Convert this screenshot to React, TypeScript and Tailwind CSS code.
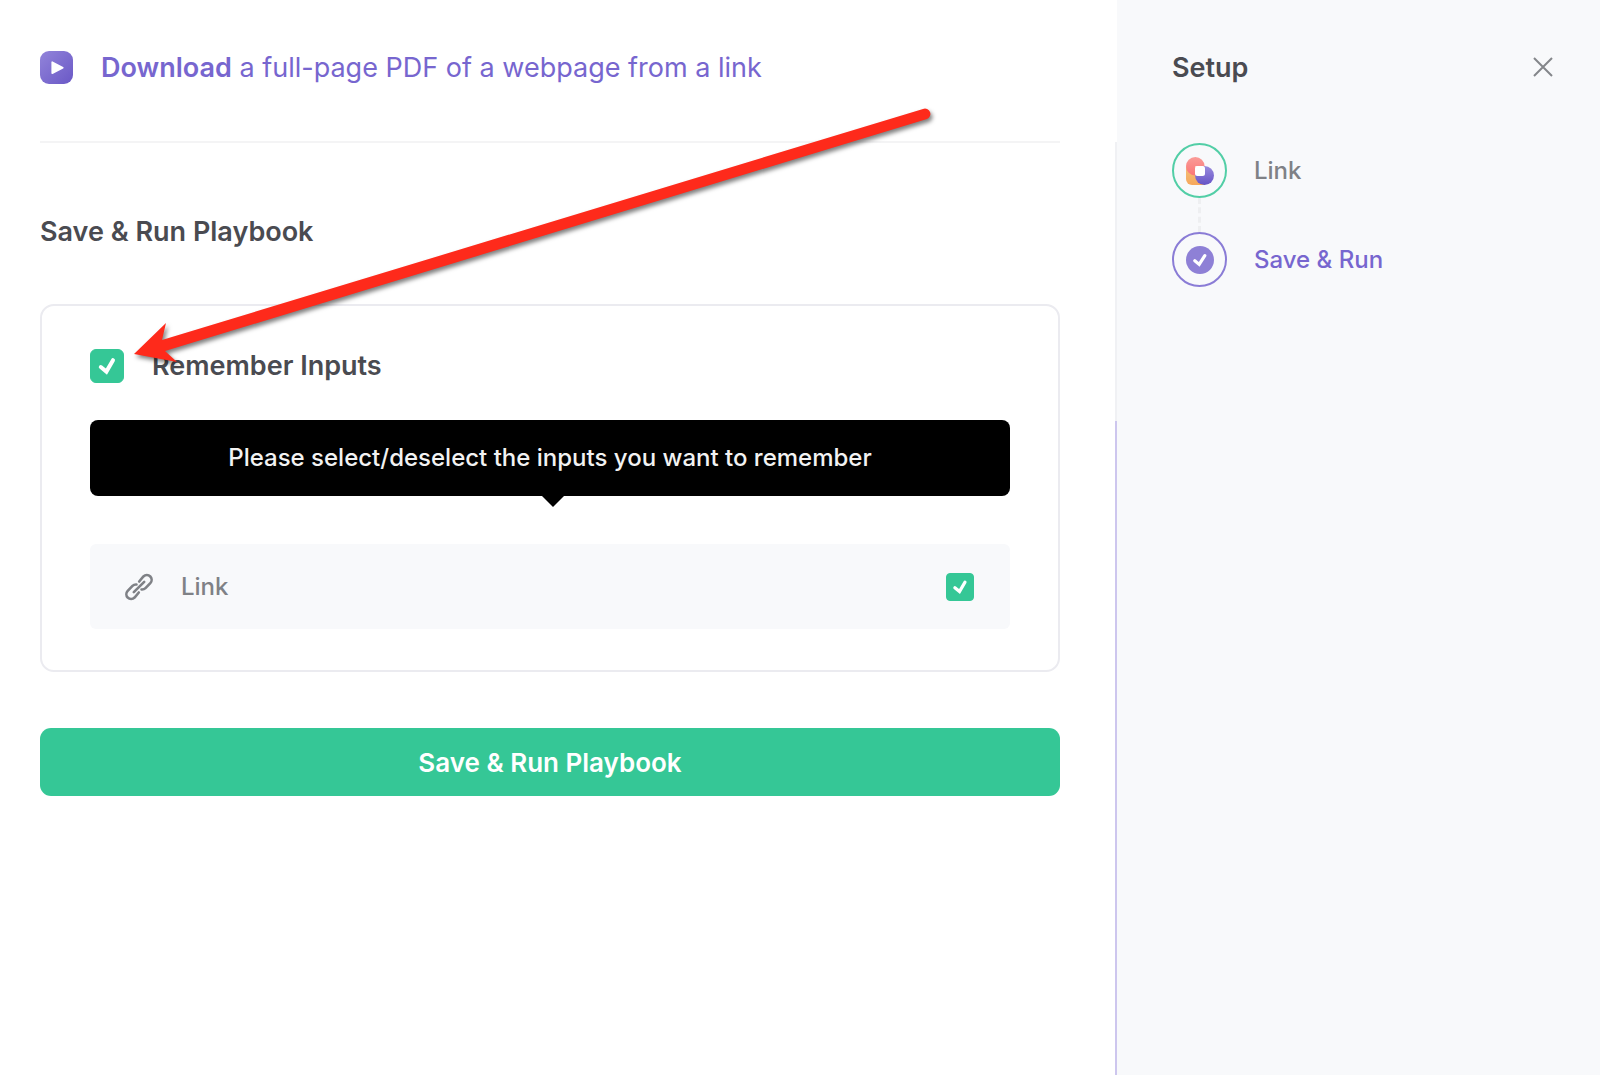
import { useState } from "react";
import clsx from "clsx";

function CheckMark({ className }: { className?: string }) {
  return (
    <svg viewBox="0 0 34 34" fill="none" className={className} aria-hidden>
      <path
        d="M10.8 18l5.6 4.6 6.6-11.4"
        stroke="currentColor"
        strokeWidth="4"
        strokeLinecap="round"
        strokeLinejoin="miter"
      />
    </svg>
  );
}

function Checkbox({
  id,
  small,
  checked,
  onChange,
}: {
  id: string;
  small?: boolean;
  checked: boolean;
  onChange: (value: boolean) => void;
}) {
  return (
    <span className={clsx("grid shrink-0", small ? "size-7" : "size-[34px]")}>
      <input
        id={id}
        type="checkbox"
        checked={checked}
        onChange={(e) => onChange(e.target.checked)}
        className={clsx(
          "peer col-start-1 row-start-1 size-full cursor-pointer appearance-none border border-[#35c796] bg-white checked:bg-[#35c796]",
          small ? "rounded-[4px]" : "rounded-[6px]",
        )}
      />
      <CheckMark className="pointer-events-none col-start-1 row-start-1 size-full text-white opacity-0 peer-checked:opacity-100" />
    </span>
  );
}

function PlaybookIcon() {
  return (
    <svg viewBox="0 0 33 33" className="size-[33px] shrink-0" aria-hidden>
      <defs>
        <linearGradient id="playbook" x1="0" y1="0" x2="1" y2="1">
          <stop offset="0" stopColor="#9284da" />
          <stop offset="1" stopColor="#6a58c6" />
        </linearGradient>
      </defs>
      <rect width="33" height="33" rx="9" fill="url(#playbook)" />
      <path
        d="M12.2 11.2v11l10.6-5.5z"
        fill="#fff"
        stroke="#fff"
        strokeWidth="1.6"
        strokeLinejoin="round"
      />
    </svg>
  );
}

function BrandIcon() {
  return (
    <svg viewBox="0 0 28 28" className="size-7" aria-hidden>
      <defs>
        <linearGradient id="coral" x1="0" y1="0" x2="0" y2="1">
          <stop offset="0" stopColor="#fa9c98" />
          <stop offset="1" stopColor="#fb7676" />
        </linearGradient>
        <linearGradient id="amber" x1="0" y1="0" x2="0" y2="1">
          <stop offset="0" stopColor="#f3c078" />
          <stop offset="1" stopColor="#f6a75c" />
        </linearGradient>
        <linearGradient id="violet" x1="0" y1="0" x2="0" y2="1">
          <stop offset="0" stopColor="#9a8cde" />
          <stop offset="1" stopColor="#6653c6" />
        </linearGradient>
      </defs>
      <path d="M0 10v12a6 6 0 0 0 6 6h13V10z" fill="url(#amber)" />
      <circle cx="18.5" cy="18.5" r="9.5" fill="url(#violet)" />
      <path
        d="M9.3 0a9.3 9.3 0 0 1 9.3 9.3H9.3v9.3A9.3 9.3 0 0 1 9.3 0z"
        fill="url(#coral)"
      />
      <rect x="9" y="9" width="10" height="10" rx="2.5" fill="#fff" />
    </svg>
  );
}

function DoneIcon() {
  return (
    <svg viewBox="0 0 28 28" fill="none" className="size-7" aria-hidden>
      <circle cx="14" cy="14" r="14" fill="#8e80d6" />
      <path
        d="M8.8 14.8l4.4 3.6 5.6-8.8"
        stroke="#fff"
        strokeWidth="3.2"
        strokeLinecap="round"
      />
    </svg>
  );
}

function ChainIcon() {
  return (
    <svg
      viewBox="0 0 28 28"
      fill="none"
      stroke="#7f8186"
      strokeWidth="2.6"
      strokeLinecap="round"
      className="size-7 shrink-0"
      aria-hidden
    >
      <path d="M14.2 8.5l4.2-5a4.9 4.9 0 0 1 6.9 0 4.900 4.900 0 0 1 0 6.700l-4.800 4.900a4.900 4.900 0 0 1-4 1.400" />
      <path d="M13.800 19.500l-4.200 5a4.900 4.900 0 0 1-6.900 0 4.900 4.900 0 0 1 0-6.700l4.800-4.900a4.900 4.900 0 0 1 4-1.400" />
      <path d="M8.8 19.2L19.2 8.8" />
    </svg>
  );
}

/* Annotation laid over the form, pointing at the first tick box. */
function PointerArrow() {
  return (
    <svg
      viewBox="0 0 820 270"
      className="pointer-events-none absolute top-[100px] left-[124px] h-[270px] w-[820px]"
      aria-hidden
    >
      <path
        d="M10 254L42 223L38 240L799 9A5.3 5.3 0 0 1 803 19L41 251L53 262Z"
        fill="#fe2a1b"
        className="drop-shadow-[2px_3px_2px_rgba(0,0,0,0.5)]"
      />
    </svg>
  );
}

function Sidebar() {
  return (
    <aside className="flex w-[485px] shrink-0">
      <div className="flex w-0.5 flex-col" aria-hidden>
        <div className="h-[142px]" />
        <div className="h-[279px] bg-[#f0f1f4]" />
        <div className="flex-1 bg-[#cdc6ee]" />
      </div>
      <div className="flex-1 bg-[#f8f9fb] pr-[45px] pl-[55px]">
        <div className="flex h-[143px] items-start justify-between pt-12">
          <h2 className="text-[27px] leading-10 font-semibold text-[#4a4b51]">Setup</h2>
          <button type="button" aria-label="Close" className="flex h-[38px] items-center">
            <svg viewBox="0 0 24 24" className="size-6" aria-hidden>
              <path d="M3 3l18 18M21 3L3 21" stroke="#84868a" strokeWidth="2" />
            </svg>
          </button>
        </div>
        <ol className="flex flex-col text-[24px] font-medium">
          <li className="flex items-center gap-[27px] text-[#7f8186]">
            <span className="flex size-[55px] items-center justify-center rounded-full border-2 border-[#35c796]/85">
              <BrandIcon />
            </span>
            Link
          </li>
          <li
            className="ml-[26px] h-[34px] border-l-3 border-dashed border-[#eeeff1]"
            aria-hidden
          />
          <li className="flex items-center gap-[27px] text-[#7766cf]" aria-current="step">
            <span className="flex size-[55px] items-center justify-center rounded-full border-2 border-[#7766cf]/85">
              <DoneIcon />
            </span>
            Save &amp; Run
          </li>
        </ol>
      </div>
    </aside>
  );
}

export default function App() {
  const [remember, setRemember] = useState(true);
  const [link, setLink] = useState(true);

  return (
    <div className="relative flex min-h-screen bg-white font-['Inter',sans-serif]">
      <main className="flex-1 pr-[55px] pl-10">
        <header className="flex h-[143px] items-start gap-7 border-b-2 border-[#f4f4f5] pt-12">
          <div className="flex h-[38px] items-center">
            <PlaybookIcon />
          </div>
          <h1 className="text-[27px] leading-10 text-[#7766cf]">
            <strong className="font-semibold">Download</strong> a full-page PDF of a webpage
            from a link
          </h1>
        </header>

        <h2 className="mt-[69px] text-[27px] leading-10 font-semibold text-[#4a4b51]">
          Save &amp; Run Playbook
        </h2>

        <section className="mt-[52px] rounded-[14px] border-2 border-[#ebebf0] px-12 pt-10 pb-[41px]">
          <div className="flex h-10 items-center gap-7">
            <Checkbox id="remember" checked={remember} onChange={setRemember} />
            <label htmlFor="remember" className="text-[27px] leading-10 font-semibold text-[#4a4b51]">
              Remember Inputs
            </label>
          </div>

          <div className="relative mt-[34px] rounded-lg bg-black px-6 py-[18px] text-center text-[24px] leading-10 font-medium text-[#f2f2f2]">
            Please select/deselect the inputs you want to remember
            <svg
              viewBox="0 0 22 11"
              className="absolute top-full left-1/2 ml-[-8px] h-[11px] w-[22px]"
              aria-hidden
            >
              <path d="M0 0h22L11 11z" fill="#000" />
            </svg>
          </div>

          <div className="mt-12 flex h-[85px] items-center rounded-md bg-[#f8f9fb] pr-9 pl-[35px]">
            <label
              htmlFor="link"
              className="flex flex-1 items-center gap-7 text-[24px] leading-10 font-medium text-[#7f8186]"
            >
              <ChainIcon />
              Link
            </label>
            <Checkbox id="link" small checked={link} onChange={setLink} />
          </div>
        </section>

        <button
          type="button"
          className="mt-14 h-[68px] w-full rounded-[11px] bg-[#35c796] text-[26px] font-semibold text-white"
        >
          Save &amp; Run Playbook
        </button>
      </main>

      <Sidebar />
      <PointerArrow />
    </div>
  );
}
